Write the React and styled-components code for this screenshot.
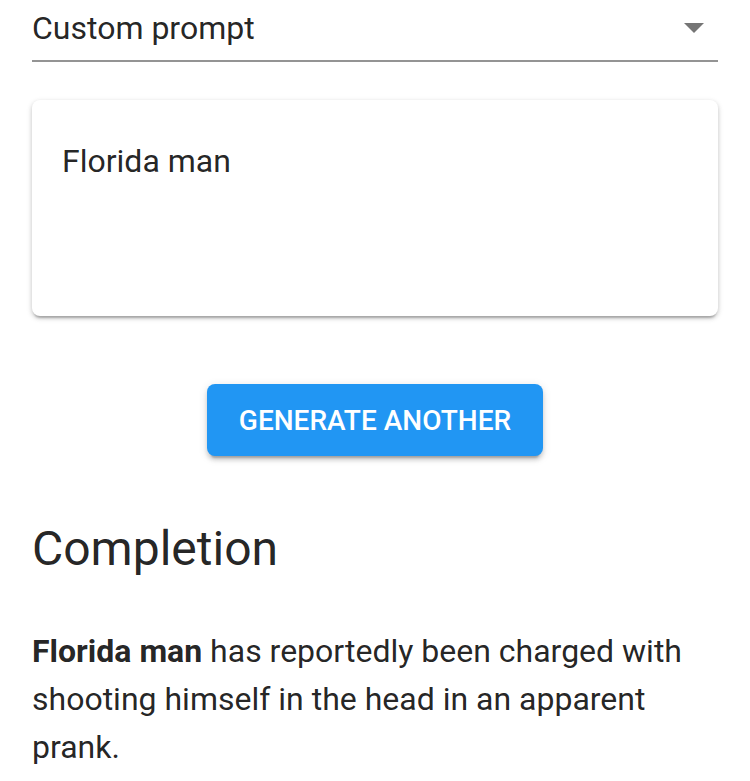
import React from "react";
import styled, { createGlobalStyle } from "styled-components";

const GlobalStyle = createGlobalStyle`
  html, body {
    margin: 0;
    padding: 0;
    background: #ffffff;
  }
  body {
    font-family: Roboto, "Liberation Sans", Arial, sans-serif;
    color: rgba(0, 0, 0, 0.87);
    -webkit-font-smoothing: antialiased;
  }
`;

const Page = styled.main`
  display: flex;
  flex-direction: column;
  padding: 0 32px 40px;
`;

const SelectRow = styled.div`
  display: flex;
  align-items: flex-start;
  border-bottom: 2px solid rgba(0, 0, 0, 0.42);
  cursor: pointer;
`;

const SelectValue = styled.div`
  flex: 1;
  padding: 9px 0 13px;
  font-size: 32px;
  line-height: 38px;
  color: rgba(0, 0, 0, 0.87);
`;

const DropIcon = styled.svg`
  flex: none;
  width: 48px;
  height: 48px;
  margin-top: 3px;
  fill: rgba(0, 0, 0, 0.54);
`;

const PromptCard = styled.div`
  margin-top: 38px;
  height: 216px;
  box-sizing: border-box;
  padding: 37px 30px;
  background: #fff;
  border-radius: 8px;
  box-shadow: 0 4px 2px -2px rgba(0, 0, 0, 0.2), 0 2px 4px 0 rgba(0, 0, 0, 0.14),
    0 2px 6px 0 rgba(0, 0, 0, 0.12);
`;

const PromptText = styled.div`
  font-size: 32px;
  line-height: 48px;
  color: rgba(0, 0, 0, 0.87);
`;

const ButtonRow = styled.div`
  display: flex;
  justify-content: center;
  margin-top: 68px;
`;

const PrimaryButton = styled.button`
  width: 336px;
  height: 72px;
  border: none;
  border-radius: 8px;
  background: #2196f3;
  color: #fff;
  font-family: Roboto, "Liberation Sans", Arial, sans-serif;
  font-size: 28px;
  font-weight: 500;
  letter-spacing: 0;
  text-transform: uppercase;
  cursor: pointer;
  box-shadow: 0 6px 2px -4px rgba(0, 0, 0, 0.2), 0 4px 4px 0 rgba(0, 0, 0, 0.14),
    0 2px 10px 0 rgba(0, 0, 0, 0.12);
`;

const Heading = styled.h2`
  margin: 65px 0 0;
  font-size: 48px;
  font-weight: 400;
  line-height: 56px;
  color: rgba(0, 0, 0, 0.87);
`;

const Completion = styled.p`
  margin: 50px 0 0;
  font-size: 32px;
  line-height: 48px;
  color: rgba(0, 0, 0, 0.87);

  strong {
    font-weight: 700;
  }
`;

export default function App() {
  return (
    <>
      <GlobalStyle />
      <Page>
        <SelectRow role="button" aria-haspopup="listbox">
          <SelectValue>Custom prompt</SelectValue>
          <DropIcon viewBox="0 0 24 24" aria-hidden="true">
            <path d="M7 10l5 5 5-5z" />
          </DropIcon>
        </SelectRow>

        <PromptCard>
          <PromptText>Florida man</PromptText>
        </PromptCard>

        <ButtonRow>
          <PrimaryButton>Generate another</PrimaryButton>
        </ButtonRow>

        <Heading>Completion</Heading>
        <Completion>
          <strong>Florida man</strong> has reportedly been charged with
          shooting himself in the head in an apparent prank.
        </Completion>
      </Page>
    </>
  );
}
